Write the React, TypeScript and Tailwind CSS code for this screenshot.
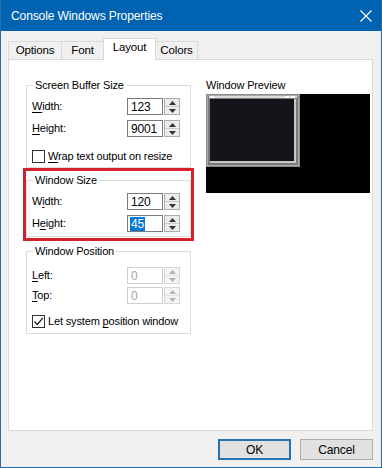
import type { ReactNode } from 'react';

const tabs = [
  { label: 'Options', width: 'w-[54px]' },
  { label: 'Font', width: 'w-[43px]' },
  { label: 'Layout', width: 'w-[53px]', active: true },
  { label: 'Colors', width: 'w-[43px]' },
];

function Arrow({ up, disabled }: { up?: boolean; disabled?: boolean }) {
  return (
    <svg width="7" height="4" viewBox="0 0 7 4">
      <path d={up ? 'M0 4 L3.5 0 L7 4 Z' : 'M0 0 L3.5 4 L7 0 Z'} fill={disabled ? '#b5b5b5' : '#333'} />
    </svg>
  );
}

function Spin({ value, disabled, selected }: { value: string; disabled?: boolean; selected?: boolean }) {
  return (
    <div className="flex h-[17px] gap-[1px]">
      <div
        className={`w-[36px] h-full bg-white border flex items-center pl-[2px] text-[12px] leading-none ${
          disabled ? 'border-[#cfcfcf] text-[#a3a3a3]' : 'border-[#7a7a7a] text-black'
        }`}
      >
        {selected ? <span className="bg-[#0078d7] text-white px-[1px] py-[1px]">{value}</span> : <span className="pl-[1px]">{value}</span>}
      </div>
      <div className={`w-[16px] h-full flex flex-col border ${disabled ? 'border-[#d6d6d6]' : 'border-[#adadad]'}`}>
        <div className={`flex-1 flex items-center justify-center border-b ${disabled ? 'border-[#e3e3e3] bg-[#f4f4f4]' : 'border-[#c9c9c9] bg-[#ececec]'}`}>
          <Arrow up disabled={disabled} />
        </div>
        <div className={`flex-1 flex items-center justify-center ${disabled ? 'bg-[#f4f4f4]' : 'bg-[#ececec]'}`}>
          <Arrow disabled={disabled} />
        </div>
      </div>
    </div>
  );
}

function Row({ label, u, rest, value, disabled, selected }: { label: string; u: string; rest: string; value: string; disabled?: boolean; selected?: boolean }) {
  return (
    <div className="flex items-center h-[17px]">
      <div className="w-[95px] leading-none whitespace-nowrap">
        {label}
        <span className="underline underline-offset-2">{u}</span>
        {rest}
      </div>
      <Spin value={value} disabled={disabled} selected={selected} />
    </div>
  );
}

function Group({ title, children, className }: { title: string; children: ReactNode; className?: string }) {
  return (
    <fieldset className={`border border-[#dcdcdc] px-[5px] ${className ?? ''}`}>
      <legend className="ml-[1px] px-[2px] leading-[15px] whitespace-nowrap">{title}</legend>
      {children}
    </fieldset>
  );
}

function Check({ checked, children }: { checked?: boolean; children: ReactNode }) {
  return (
    <div className="flex items-center gap-[3px] leading-none whitespace-nowrap">
      <div className="w-[13px] h-[13px] shrink-0 border border-[#333] bg-white flex items-center justify-center">
        {checked && (
          <svg width="11" height="11" viewBox="0 0 11 11">
            <path d="M1.5 5.5 L4.3 8.5 L9.8 2" fill="none" stroke="#222" strokeWidth="1.2" />
          </svg>
        )}
      </div>
      <span>{children}</span>
    </div>
  );
}

export default function App() {
  return (
    <div className="w-[382px] h-[468px] flex flex-col bg-[#f0f0f0] border border-t-0 border-[#2a6aa6] text-black text-[11px] tracking-[-0.15px] font-['Liberation_Sans',Arial,sans-serif]">
      <div className="h-[31px] bg-[#0063b1] flex items-center justify-between pl-[10px] pr-[9px] text-white text-[12px] tracking-[-0.1px]">
        <span>Console Windows Properties</span>
        <svg width="12" height="12" viewBox="0 0 12 12">
          <path d="M0.5 0.5 L11.5 11.5 M11.5 0.5 L0.5 11.5" stroke="#fff" strokeWidth="1.1" />
        </svg>
      </div>

      <div className="flex-1 flex flex-col pl-[7px] pr-[8px]">
        <div className="flex items-end h-[21px] mt-[7px] relative z-10">
          {tabs.map((t, i) => (
            <div
              key={t.label}
              className={`${t.width} flex items-center justify-center text-[11.5px] border border-[#d9d9d9] ${i > 0 ? '-ml-px' : ''} ${
                t.active ? 'bg-white border-b-0 pb-[3px] -mb-px h-[22px]' : 'h-[18px] bg-[#f0f0f0] border-b-0'
              }`}
            >
              {t.label}
            </div>
          ))}
        </div>

        <div className="h-[372px] bg-white border border-[#d9d9d9] flex pl-[17px]">
          <div className="w-[165px] flex flex-col">
            <Group title="Screen Buffer Size" className="mt-[18px] pb-[4px]">
              <div className="flex flex-col gap-[5px] mt-[5px]">
                <Row label="" u="W" rest="idth:" value="123" />
                <Row label="" u="H" rest="eight:" value="9001" />
              </div>
              <div className="mt-[13px]">
                <Check>
                  <span className="underline underline-offset-2">W</span>rap text output on resize
                </Check>
              </div>
            </Group>

            <div className="-mx-[3px] border-[3px] border-[#d3202a] pt-[2px] pb-[1px]">
              <Group title="Window Size" className="pb-[4px]">
                <div className="flex flex-col gap-[5px] mt-[5px]">
                  <Row label="W" u="i" rest="dth:" value="120" />
                  <Row label="H" u="e" rest="ight:" value="45" selected />
                </div>
              </Group>
            </div>

            <Group title="Window Position" className="mt-[3px] pb-[5px]">
              <div className="flex flex-col gap-[3px] mt-[8px]">
                <Row label="" u="L" rest="eft:" value="0" disabled />
                <Row label="" u="T" rest="op:" value="0" disabled />
              </div>
              <div className="mt-[11px]">
                <Check checked>
                  Let system <span className="underline underline-offset-2">p</span>osition window
                </Check>
              </div>
            </Group>
          </div>

          <div className="ml-[15px] w-[164px] flex flex-col mt-[18px]">
            <div className="leading-[15px]">Window Preview</div>
            <div className="mt-[1px] h-[99px] bg-black">
              <svg width="164" height="99" viewBox="0 0 164 99">
                <rect x="0" y="0" width="94" height="73" fill="#8a8a8a" />
                <rect x="1" y="1" width="92" height="71" fill="#a9a9a9" />
                <rect x="2" y="2" width="90" height="69" fill="#7b7b7b" />
                <rect x="3" y="2" width="88" height="2" fill="#dcdcdc" />
                <rect x="4" y="2" width="4" height="2" fill="#ffffff" />
                <rect x="79" y="2" width="4" height="2" fill="#ffffff" />
                <rect x="85" y="2" width="4" height="2" fill="#ffffff" />
                <rect x="4" y="5" width="86" height="64" fill="#16131b" />
                <rect x="88" y="5" width="2" height="64" fill="#c8c8c8" />
                <rect x="4" y="67" width="86" height="2" fill="#c8c8c8" />
              </svg>
            </div>
          </div>
        </div>

        <div className="flex justify-end gap-[9px] mt-[8px]">
          <button className="w-[73px] h-[21px] bg-[#e1e1e1] border-2 border-[#2573b0] text-[12px]">OK</button>
          <button className="w-[73px] h-[21px] bg-[#e1e1e1] border border-[#adadad] text-[12px]">Cancel</button>
        </div>
      </div>
    </div>
  );
}
